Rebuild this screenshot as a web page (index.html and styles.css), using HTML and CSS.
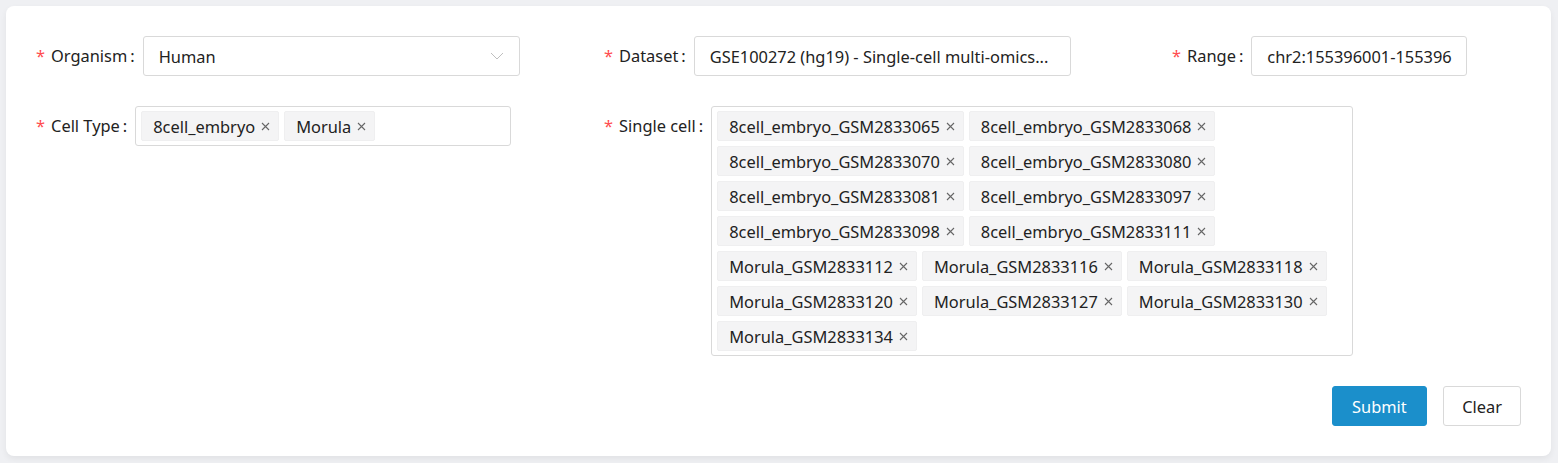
FILE: index.html
```html
<!DOCTYPE html>
<html lang="en">
<head>
  <meta charset="UTF-8">
  <title>Query</title>
  <link rel="stylesheet" href="styles.css">
</head>
<body>
  <div class="card">
    <form class="query-form">
      <div class="form-row">
        <div class="form-item col">
          <label class="form-label"><span class="req">*</span>Organism<span class="colon">:</span></label>
          <div class="control select">
            <span class="select-value">Human</span>
            <svg class="chevron" width="14" height="8" viewBox="0 0 14 8"><polyline points="1,1 7,7 13,1" fill="none" stroke="#bfbfbf" stroke-width="1"/></svg>
          </div>
        </div>
        <div class="form-item col">
          <label class="form-label"><span class="req">*</span>Dataset<span class="colon">:</span></label>
          <div class="control select">
            <span class="select-value">GSE100272 (hg19) - Single-cell multi-omics...</span>
          </div>
        </div>
        <div class="form-item">
          <label class="form-label"><span class="req">*</span>Range<span class="colon">:</span></label>
          <div class="control select narrow">
            <span class="select-value">chr2:155396001-155396</span>
          </div>
        </div>
      </div>

      <div class="form-row">
        <div class="form-item col">
          <label class="form-label"><span class="req">*</span>Cell Type<span class="colon">:</span></label>
          <div class="control tags short">
            <span class="tag">8cell_embryo<svg class="tag-close" width="9" height="9" viewBox="0 0 9 9"><path d="M1 1L8 8M8 1L1 8" stroke="#666" stroke-width="1.1"/></svg></span>
            <span class="tag">Morula<svg class="tag-close" width="9" height="9" viewBox="0 0 9 9"><path d="M1 1L8 8M8 1L1 8" stroke="#666" stroke-width="1.1"/></svg></span>
          </div>
        </div>
        <div class="form-item">
          <label class="form-label"><span class="req">*</span>Single cell<span class="colon">:</span></label>
          <div class="control tags wide" id="cells"></div>
        </div>
      </div>

      <div class="form-actions">
        <button type="button" class="btn btn-primary">Submit</button>
        <button type="button" class="btn">Clear</button>
      </div>
    </form>
  </div>
  <script>
    const cells = [
      '8cell_embryo_GSM2833065', '8cell_embryo_GSM2833068',
      '8cell_embryo_GSM2833070', '8cell_embryo_GSM2833080',
      '8cell_embryo_GSM2833081', '8cell_embryo_GSM2833097',
      '8cell_embryo_GSM2833098', '8cell_embryo_GSM2833111',
      'Morula_GSM2833112', 'Morula_GSM2833116', 'Morula_GSM2833118',
      'Morula_GSM2833120', 'Morula_GSM2833127', 'Morula_GSM2833130',
      'Morula_GSM2833134'
    ];
    const closeIcon = '<svg class="tag-close" width="9" height="9" viewBox="0 0 9 9"><path d="M1 1L8 8M8 1L1 8" stroke="#666" stroke-width="1.1"/></svg>';
    const box = document.getElementById('cells');
    box.innerHTML = cells.map(name => `<span class="tag">${name}${closeIcon}</span>`).join('');
  </script>
</body>
</html>
```

FILE: styles.css
```css
html, body {
  margin: 0;
  padding: 0;
}
body {
  background: #eff0f3;
  padding: 6px 7px 7px 6px;
  font-family: "Noto Sans", "Open Sans", Arial, sans-serif;
  font-size: 16.4px;
  color: #222;
}
.card {
  background: #fff;
  border-radius: 8px;
  padding: 30px;
  box-shadow: 0 3px 6px rgba(0, 0, 0, 0.06);
}
.form-row {
  display: flex;
  align-items: flex-start;
  margin-bottom: 30px;
}
.form-item {
  display: flex;
  align-items: flex-start;
}
.form-item.col {
  width: 568px;
  flex: none;
}
.form-label {
  height: 40px;
  line-height: 40px;
  white-space: nowrap;
}
.req {
  color: #ff4d4f;
  margin-right: 6px;
}
.colon {
  margin: 0 8px 0 3px;
}
.control {
  box-sizing: border-box;
  width: 377px;
  border: 1px solid #d9d9d9;
  border-radius: 3px;
  background: #fff;
}
.select {
  height: 40px;
  display: flex;
  align-items: center;
  padding: 0 14px 0 15px;
  overflow: hidden;
}
.select-value {
  flex: 1;
  min-width: 0;
  white-space: nowrap;
}
.chevron {
  margin-right: 1px;
}
.narrow {
  width: 216px;
}
.tags {
  display: flex;
  flex-wrap: wrap;
  gap: 5px;
  padding: 4px 5px;
}
.short {
  width: 376px;
  min-height: 40px;
}
.wide {
  width: 642px;
}
.tag {
  box-sizing: border-box;
  display: inline-flex;
  align-items: center;
  height: 30px;
  padding: 0 8px 0 11px;
  background: #f4f4f5;
  border: 1px solid #efeff0;
  border-radius: 2px;
  white-space: nowrap;
}
.tag-close {
  margin-left: 6px;
}
.form-actions {
  display: flex;
  justify-content: flex-end;
  gap: 16px;
}
.btn {
  box-sizing: border-box;
  height: 40px;
  padding: 0 18px;
  font: inherit;
  color: #222;
  background: #fff;
  border: 1px solid #d9d9d9;
  border-radius: 3px;
  cursor: pointer;
}
.btn-primary {
  background: #1b8fcb;
  border-color: #1b8fcb;
  color: #fff;
  padding: 0 19.5px;
}
```
